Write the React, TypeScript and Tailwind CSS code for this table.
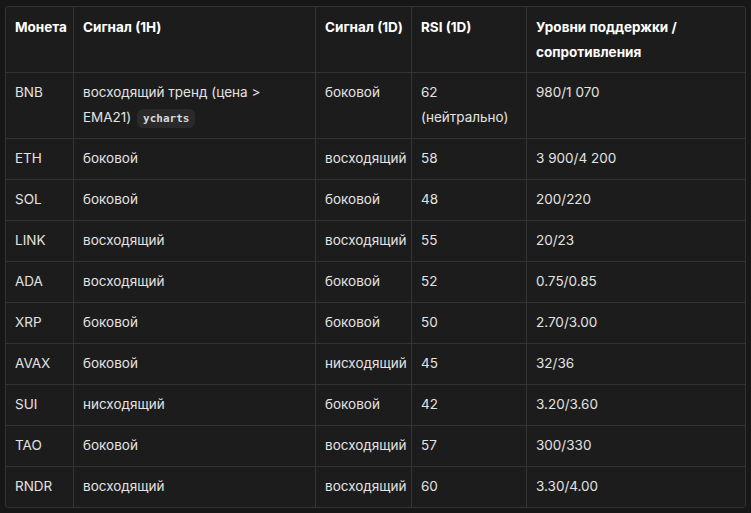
import React from "react";

type Row = {
  coin: string;
  h1: React.ReactNode;
  d1: string;
  rsi: React.ReactNode;
  levels: string;
};

const rows: Row[] = [
  {
    coin: "BNB",
    h1: (
      <>
        восходящий тренд (цена &gt; EMA21){" "}
        <span className="ml-0.5 rounded-md bg-[#2a2a2a] px-1.5 py-[3px] font-['DejaVu_Sans_Mono',monospace] text-[11px] leading-none font-bold text-[#d8d8d8]">
          ycharts
        </span>
      </>
    ),
    d1: "боковой",
    rsi: (
      <>
        62
        <br />
        (нейтрально)
      </>
    ),
    levels: "980/1 070",
  },
  { coin: "ETH", h1: "боковой", d1: "восходящий", rsi: "58", levels: "3 900/4 200" },
  { coin: "SOL", h1: "боковой", d1: "боковой", rsi: "48", levels: "200/220" },
  { coin: "LINK", h1: "восходящий", d1: "восходящий", rsi: "55", levels: "20/23" },
  { coin: "ADA", h1: "восходящий", d1: "боковой", rsi: "52", levels: "0.75/0.85" },
  { coin: "XRP", h1: "боковой", d1: "боковой", rsi: "50", levels: "2.70/3.00" },
  { coin: "AVAX", h1: "боковой", d1: "нисходящий", rsi: "45", levels: "32/36" },
  { coin: "SUI", h1: "нисходящий", d1: "боковой", rsi: "42", levels: "3.20/3.60" },
  { coin: "TAO", h1: "боковой", d1: "восходящий", rsi: "57", levels: "300/330" },
  { coin: "RNDR", h1: "восходящий", d1: "восходящий", rsi: "60", levels: "3.30/4.00" },
];

const th = "border border-[#333333] px-[9px] pt-[7.5px] pb-[7px] text-left align-top font-bold text-white";
const td = "border border-[#333333] px-[9px] py-[7.5px] align-top";

export default function App() {
  return (
    <div className="min-h-[513px] w-[751px] bg-[#171717] px-[5px] pt-[6px] font-['Inter','Liberation_Sans',sans-serif] text-[13.5px] leading-[25px] text-[#e3e3e3]">
      <div className="overflow-hidden rounded-[3px] border border-[#333333]">
        <table className="-m-px w-[741px] table-fixed border-collapse bg-[#1c1c1c]">
          <colgroup>
            <col className="w-[68px]" />
            <col className="w-[242px]" />
            <col className="w-[96px]" />
            <col className="w-[115px]" />
            <col className="w-[220px]" />
          </colgroup>
          <thead>
            <tr>
              <th className={th}>Монета</th>
              <th className={th}>Сигнал (1H)</th>
              <th className={`${th} whitespace-nowrap`}>Сигнал (1D)</th>
              <th className={th}>RSI (1D)</th>
              <th className={th}>Уровни поддержки / сопротивления</th>
            </tr>
          </thead>
          <tbody>
            {rows.map((r) => (
              <tr key={r.coin}>
                <td className={td}>{r.coin}</td>
                <td className={td}>{r.h1}</td>
                <td className={td}>{r.d1}</td>
                <td className={td}>{r.rsi}</td>
                <td className={td}>{r.levels}</td>
              </tr>
            ))}
          </tbody>
        </table>
      </div>
    </div>
  );
}
